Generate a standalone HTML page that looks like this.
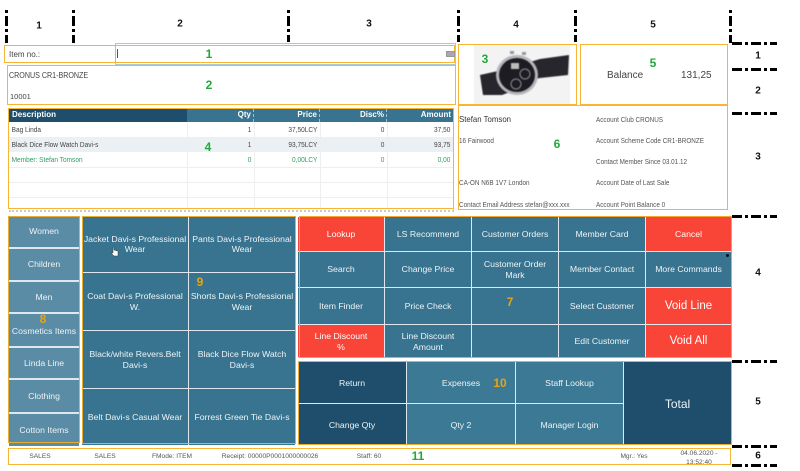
<!DOCTYPE html>
<html><head><meta charset="utf-8">
<style>
html,body{margin:0;padding:0;background:#fff}
#p{position:relative;width:800px;height:471px;overflow:hidden;background:#fff;font-family:"Liberation Sans",sans-serif;color:#444;font-size:7.5px;filter:blur(.3px)}
#p div{position:absolute;box-sizing:border-box}
.t{white-space:nowrap}
.n{font-weight:bold;font-size:10px;color:#111;transform:translate(-50%,-50%);white-space:nowrap}
.g{font-weight:bold;font-size:12px;color:#22a83a;transform:translate(-50%,-50%)}
.y{font-weight:bold;font-size:12px;color:#e8a413;transform:translate(-50%,-50%)}
.o{border:1.3px solid #f8b434}
.b{display:flex;align-items:center;justify-content:center;text-align:center;color:#eef3f6;font-size:8.7px;line-height:10.5px;background:#38748f;border-right:1px solid #dfe8ee;border-bottom:1px solid #dfe8ee;white-space:nowrap}
.r{background:#f94438;color:#fff}
.d{background:#1e4e6c}
.m{background:#5a8ca6;border-right:0;border-bottom:2px solid #dfe8ee}
.h{color:#fff;font-weight:bold;font-size:8px;line-height:12px;background:#38748f;text-align:right;padding-right:2px;border-right:1px dashed #9fbccb}
.c{text-align:right;font-size:7.5px;line-height:15px;padding-right:3px;height:15px;transform:scaleX(.87);transform-origin:right center;white-space:nowrap}
.cl{text-align:left;padding-left:3px;transform-origin:left center}
.v{width:3px;background:repeating-linear-gradient(180deg,#000 0 3px,transparent 3px 6px,#000 6px 16px,transparent 16px 19px)}
.l{height:3px;background:repeating-linear-gradient(90deg,#000 0 10px,transparent 10px 13px,#000 13px 16px,transparent 16px 19px)}
.s{font-size:6.6px;color:#555;white-space:nowrap;transform:translateX(-50%);top:453px;text-align:center}
.i{font-size:7.3px;color:#555;white-space:nowrap;transform:scaleX(.87);transform-origin:left center}
</style></head><body><div id="p">

<div class="v" style="left:5px;top:10px;height:33px"></div>
<div class="v" style="left:72px;top:10px;height:33px"></div>
<div class="v" style="left:287px;top:10px;height:32px"></div>
<div class="v" style="left:457px;top:10px;height:32px"></div>
<div class="v" style="left:574px;top:10px;height:32px"></div>
<div class="v" style="left:729px;top:10px;height:33px"></div>
<div class="l" style="left:732px;top:42px;width:45px"></div>
<div class="l" style="left:732px;top:68px;width:45px"></div>
<div class="l" style="left:732px;top:112px;width:45px"></div>
<div class="l" style="left:732px;top:215px;width:45px"></div>
<div class="l" style="left:732px;top:360px;width:45px"></div>
<div class="l" style="left:732px;top:445px;width:45px"></div>
<div class="l" style="left:732px;top:464px;width:45px"></div>

<div class="n" style="left:39px;top:26px">1</div>
<div class="n" style="left:180px;top:24px">2</div>
<div class="n" style="left:369px;top:24px">3</div>
<div class="n" style="left:516px;top:25px">4</div>
<div class="n" style="left:653px;top:25px">5</div>
<div class="n" style="left:758px;top:56px">1</div>
<div class="n" style="left:758px;top:91px">2</div>
<div class="n" style="left:758px;top:157px">3</div>
<div class="n" style="left:758px;top:273px">4</div>
<div class="n" style="left:758px;top:402px">5</div>
<div class="n" style="left:758px;top:456px">6</div>

<!-- top row -->
<div class="o" style="left:4px;top:45px;width:112px;height:18px"></div>
<div class="t" style="left:9px;top:50px;font-size:8px">Item no.:</div>
<div style="left:115px;top:43px;width:341px;height:22px;border:1px solid #a8c8dc"></div>
<div class="o" style="left:115px;top:45px;width:340px;height:18px"></div>
<div style="left:117px;top:49px;width:1px;height:9px;background:#555"></div>
<div style="left:446px;top:51px;width:9px;height:6px;background:#a9a9a9;border:1px solid #999"></div>
<div class="g" style="left:209px;top:54px">1</div>

<div class="o" style="left:7px;top:65px;width:449px;height:40px"></div>
<div class="t" style="left:9px;top:71px;font-size:8.2px;transform:scaleX(.87);transform-origin:left center">CRONUS CR1-BRONZE</div>
<div class="t" style="left:10px;top:92px;font-size:7.5px">10001</div>
<div class="g" style="left:209px;top:85px">2</div>

<!-- watch -->
<div style="left:474px;top:45px;width:96px;height:59px;overflow:hidden;background:#f3f3f3">
<svg width="96" height="59" viewBox="474 45 96 59" style="display:block;filter:blur(.5px)">
<polygon points="530,62 540,59 569,55 568,75 540,78 530,80" fill="#26262c"/>
<polygon points="480,75 498,71 508,80 510,92 502,95 483,95" fill="#26262c"/>
<ellipse cx="517" cy="75" rx="21" ry="20" fill="#b4b6ba"/>
<ellipse cx="517" cy="75" rx="18" ry="17" fill="#1c1c22"/>
<circle cx="525" cy="74" r="5" fill="none" stroke="#8c8c92" stroke-width="1"/>
<circle cx="516" cy="84" r="5" fill="none" stroke="#8c8c92" stroke-width="1"/>
<rect x="511" y="63" width="8" height="6" fill="#bbb"/>
<rect x="510" y="51" width="4" height="3" fill="#999"/><rect x="522" y="52" width="4" height="3" fill="#999"/>
</svg></div>
<div class="o" style="left:458px;top:44px;width:119px;height:61px"></div>
<div class="g" style="left:485px;top:59px">3</div>

<div class="o" style="left:580px;top:44px;width:148px;height:61px"></div>
<div class="t" style="left:607px;top:70px;font-size:10px">Balance</div>
<div class="t" style="left:681px;top:70px;font-size:10px">131,25</div>
<div class="g" style="left:653px;top:63px">5</div>

<!-- grid -->
<div style="left:9px;top:108px;width:445px;height:104px;border-right:1px solid #ccc;border-bottom:2px dotted #ccc"></div>
<div style="left:9px;top:122px;width:444px;height:87px;background:linear-gradient(#fff 15px,#ebf0f4 15px,#ebf0f4 30px,#fff 30px)"></div>
<div style="left:9px;top:167px;width:444px;height:1px;background:#eee"></div>
<div style="left:9px;top:182px;width:444px;height:1px;background:#eee"></div>
<div style="left:9px;top:197px;width:444px;height:1px;background:#eee"></div>
<div style="left:187px;top:122px;width:1px;height:87px;background:#eee"></div>
<div style="left:254px;top:122px;width:1px;height:87px;background:#eee"></div>
<div style="left:320px;top:122px;width:1px;height:87px;background:#eee"></div>
<div style="left:387px;top:122px;width:1px;height:87px;background:#eee"></div>
<div class="h" style="left:9px;top:109px;width:178px;height:13px;background:#1e4e6c;text-align:left;padding-left:3px;border:0">Description</div>
<div class="h" style="left:187px;top:109px;width:67px;height:13px">Qty</div>
<div class="h" style="left:254px;top:109px;width:66px;height:13px">Price</div>
<div class="h" style="left:320px;top:109px;width:67px;height:13px">Disc%</div>
<div class="h" style="left:387px;top:109px;width:67px;height:13px">Amount</div>

<div class="c cl" style="left:9px;top:122px;width:178px">Bag Linda</div>
<div class="c" style="left:187px;top:122px;width:67px">1</div>
<div class="c" style="left:254px;top:122px;width:66px">37,50LCY</div>
<div class="c" style="left:320px;top:122px;width:67px">0</div>
<div class="c" style="left:387px;top:122px;width:66px">37,50</div>
<div class="c cl" style="left:9px;top:137px;width:178px">Black Dice Flow Watch Davi-s</div>
<div class="c" style="left:187px;top:137px;width:67px">1</div>
<div class="c" style="left:254px;top:137px;width:66px">93,75LCY</div>
<div class="c" style="left:320px;top:137px;width:67px">0</div>
<div class="c" style="left:387px;top:137px;width:66px">93,75</div>
<div class="c cl" style="left:9px;top:152px;width:178px;color:#2e9e5e">Member: Stefan Tomson</div>
<div class="c" style="left:187px;top:152px;width:67px;color:#2e9e5e">0</div>
<div class="c" style="left:254px;top:152px;width:66px;color:#2e9e5e">0,00LCY</div>
<div class="c" style="left:320px;top:152px;width:67px;color:#2e9e5e">0</div>
<div class="c" style="left:387px;top:152px;width:66px;color:#2e9e5e">0,00</div>
<div class="o" style="left:8px;top:108px;width:446px;height:101px"></div>
<div class="g" style="left:208px;top:147px">4</div>

<!-- info -->
<div class="o" style="left:458px;top:105px;width:270px;height:105px"></div>
<div class="i" style="left:459px;top:114px;font-size:8.5px;color:#333;transform:scaleX(.92)">Stefan Tomson</div>
<div class="i" style="left:459px;top:136px">16 Fairwood</div>
<div class="i" style="left:459px;top:178px">CA-ON N6B 1V7 London</div>
<div class="i" style="left:459px;top:200px">Contact Email Address stefan@xxx.xxx</div>
<div class="i" style="left:596px;top:115px">Account Club CRONUS</div>
<div class="i" style="left:596px;top:136px">Account Scheme Code CR1-BRONZE</div>
<div class="i" style="left:596px;top:157px">Contact Member Since 03.01.12</div>
<div class="i" style="left:596px;top:178px">Account Date of Last Sale</div>
<div class="i" style="left:596px;top:200px">Account Point Balance 0</div>
<div class="g" style="left:557px;top:144px">6</div>

<!-- menu -->
<div class="b m" style="left:9px;top:216px;width:70px;height:33px">Women</div>
<div class="b m" style="left:9px;top:249px;width:70px;height:33px">Children</div>
<div class="b m" style="left:9px;top:282px;width:70px;height:32px">Men</div>
<div class="b m" style="left:9px;top:314px;width:70px;height:34px;padding-top:2px">Cosmetics Items</div>
<div class="b m" style="left:9px;top:348px;width:70px;height:32px">Linda Line</div>
<div class="b m" style="left:9px;top:380px;width:70px;height:34px">Clothing</div>
<div class="b m" style="left:9px;top:414px;width:70px;height:32px;border-bottom:0">Cotton Items</div>
<div style="left:8px;top:216px;width:72px;height:227px;border:1.3px solid #e8ae33"></div>
<div class="y" style="left:43px;top:319px">8</div>

<!-- items -->
<div class="b" style="left:82px;top:216px;width:107px;height:57px">Jacket Davi-s Professional<br>Wear</div>
<div class="b" style="left:189px;top:216px;width:106px;height:57px;border-right:0">Pants Davi-s Professional<br>Wear</div>
<div class="b" style="left:82px;top:273px;width:107px;height:58px">Coat Davi-s Professional<br>W.</div>
<div class="b" style="left:189px;top:273px;width:106px;height:58px;border-right:0">Shorts Davi-s Professional<br>Wear</div>
<div class="b" style="left:82px;top:331px;width:107px;height:58px">Black/white Revers.Belt<br>Davi-s</div>
<div class="b" style="left:189px;top:331px;width:106px;height:58px;border-right:0">Black Dice Flow Watch<br>Davi-s</div>
<div class="b" style="left:82px;top:389px;width:107px;height:56px;border-bottom:0">Belt Davi-s Casual Wear</div>
<div class="b" style="left:189px;top:389px;width:106px;height:56px;border-right:0;border-bottom:0">Forrest Green Tie Davi-s</div>
<div style="left:82px;top:216px;width:214px;height:228px;border:1.3px solid #e8ae33"></div>
<svg style="position:absolute;left:111px;top:246px" width="8" height="11" viewBox="0 0 8 11"><path d="M2 1v6L1 6v2l2 2h4V5L5 4.5 3 4V1z" fill="#fff" stroke="#333" stroke-width=".5"/></svg>
<div class="y" style="left:200px;top:282px">9</div>

<!-- commands -->
<div class="b r" style="left:298px;top:217px;width:87px;height:35px">Lookup</div>
<div class="b" style="left:385px;top:217px;width:87px;height:35px">LS Recommend</div>
<div class="b" style="left:472px;top:217px;width:87px;height:35px">Customer Orders</div>
<div class="b" style="left:559px;top:217px;width:87px;height:35px">Member Card</div>
<div class="b r" style="left:646px;top:217px;width:85px;height:35px;border-right:0">Cancel</div>
<div class="b" style="left:298px;top:252px;width:87px;height:36px">Search</div>
<div class="b" style="left:385px;top:252px;width:87px;height:36px">Change Price</div>
<div class="b" style="left:472px;top:252px;width:87px;height:36px">Customer Order<br>Mark</div>
<div class="b" style="left:559px;top:252px;width:87px;height:36px">Member Contact</div>
<div class="b" style="left:646px;top:252px;width:85px;height:36px;border-right:0">More Commands</div>
<div style="left:726px;top:254px;width:3px;height:3px;border-radius:50%;background:#111"></div>
<div class="b" style="left:298px;top:288px;width:87px;height:37px">Item Finder</div>
<div class="b" style="left:385px;top:288px;width:87px;height:37px">Price Check</div>
<div class="b" style="left:472px;top:288px;width:87px;height:37px"></div>
<div class="b" style="left:559px;top:288px;width:87px;height:37px">Select Customer</div>
<div class="b r" style="left:646px;top:288px;width:85px;height:37px;border-right:0;font-size:11.5px">Void Line</div>
<div class="b r" style="left:298px;top:325px;width:87px;height:33px;padding-top:1px">Line Discount<br>%</div>
<div class="b" style="left:385px;top:325px;width:87px;height:33px;padding-top:1px">Line Discount<br>Amount</div>
<div class="b" style="left:472px;top:325px;width:87px;height:33px"></div>
<div class="b" style="left:559px;top:325px;width:87px;height:33px">Edit Customer</div>
<div class="b r" style="left:646px;top:325px;width:85px;height:33px;border-right:0;font-size:11.5px">Void All</div>
<div style="left:299px;top:216px;width:433px;height:142px;border:1.3px solid #f6a52c"></div>
<div class="y" style="left:510px;top:302px">7</div>

<!-- lower -->
<div class="b d" style="left:298px;top:362px;width:109px;height:42px;padding-top:1px">Return</div>
<div class="b" style="left:407px;top:362px;width:109px;height:42px;background:#3c7994;padding-top:1px">Expenses</div>
<div class="b" style="left:516px;top:362px;width:108px;height:42px;background:#3c7994;padding-top:1px">Staff Lookup</div>
<div class="b d" style="left:298px;top:404px;width:109px;height:41px;border-bottom:0;padding-top:1px">Change Qty</div>
<div class="b" style="left:407px;top:404px;width:109px;height:41px;border-bottom:0;background:#3c7994;padding-top:1px">Qty 2</div>
<div class="b" style="left:516px;top:404px;width:108px;height:41px;border-bottom:0;background:#3c7994;padding-top:1px">Manager Login</div>
<div class="b d" style="left:624px;top:362px;width:107px;height:83px;border:0;font-size:12px;padding-top:1px">Total</div>
<div style="left:298px;top:361px;width:434px;height:84px;border:1.3px solid #f0ae30"></div>
<div class="y" style="left:500px;top:383px;font-size:12px">10</div>

<!-- status -->
<div class="o" style="left:8px;top:448px;width:723px;height:17px"></div>
<div class="s" style="left:40px">SALES</div>
<div class="s" style="left:105px">SALES</div>
<div class="s" style="left:172px">FMode: ITEM</div>
<div class="s" style="left:270px">Receipt: 00000P0001000000026</div>
<div class="s" style="left:369px">Staff: 60</div>
<div class="g" style="left:418px;top:456px">11</div>
<div class="s" style="left:634px">Mgr.: Yes</div>
<div class="s" style="left:699px;top:449px;line-height:9px">04.06.2020 -<br>13:52:40</div>
</div></body></html>
